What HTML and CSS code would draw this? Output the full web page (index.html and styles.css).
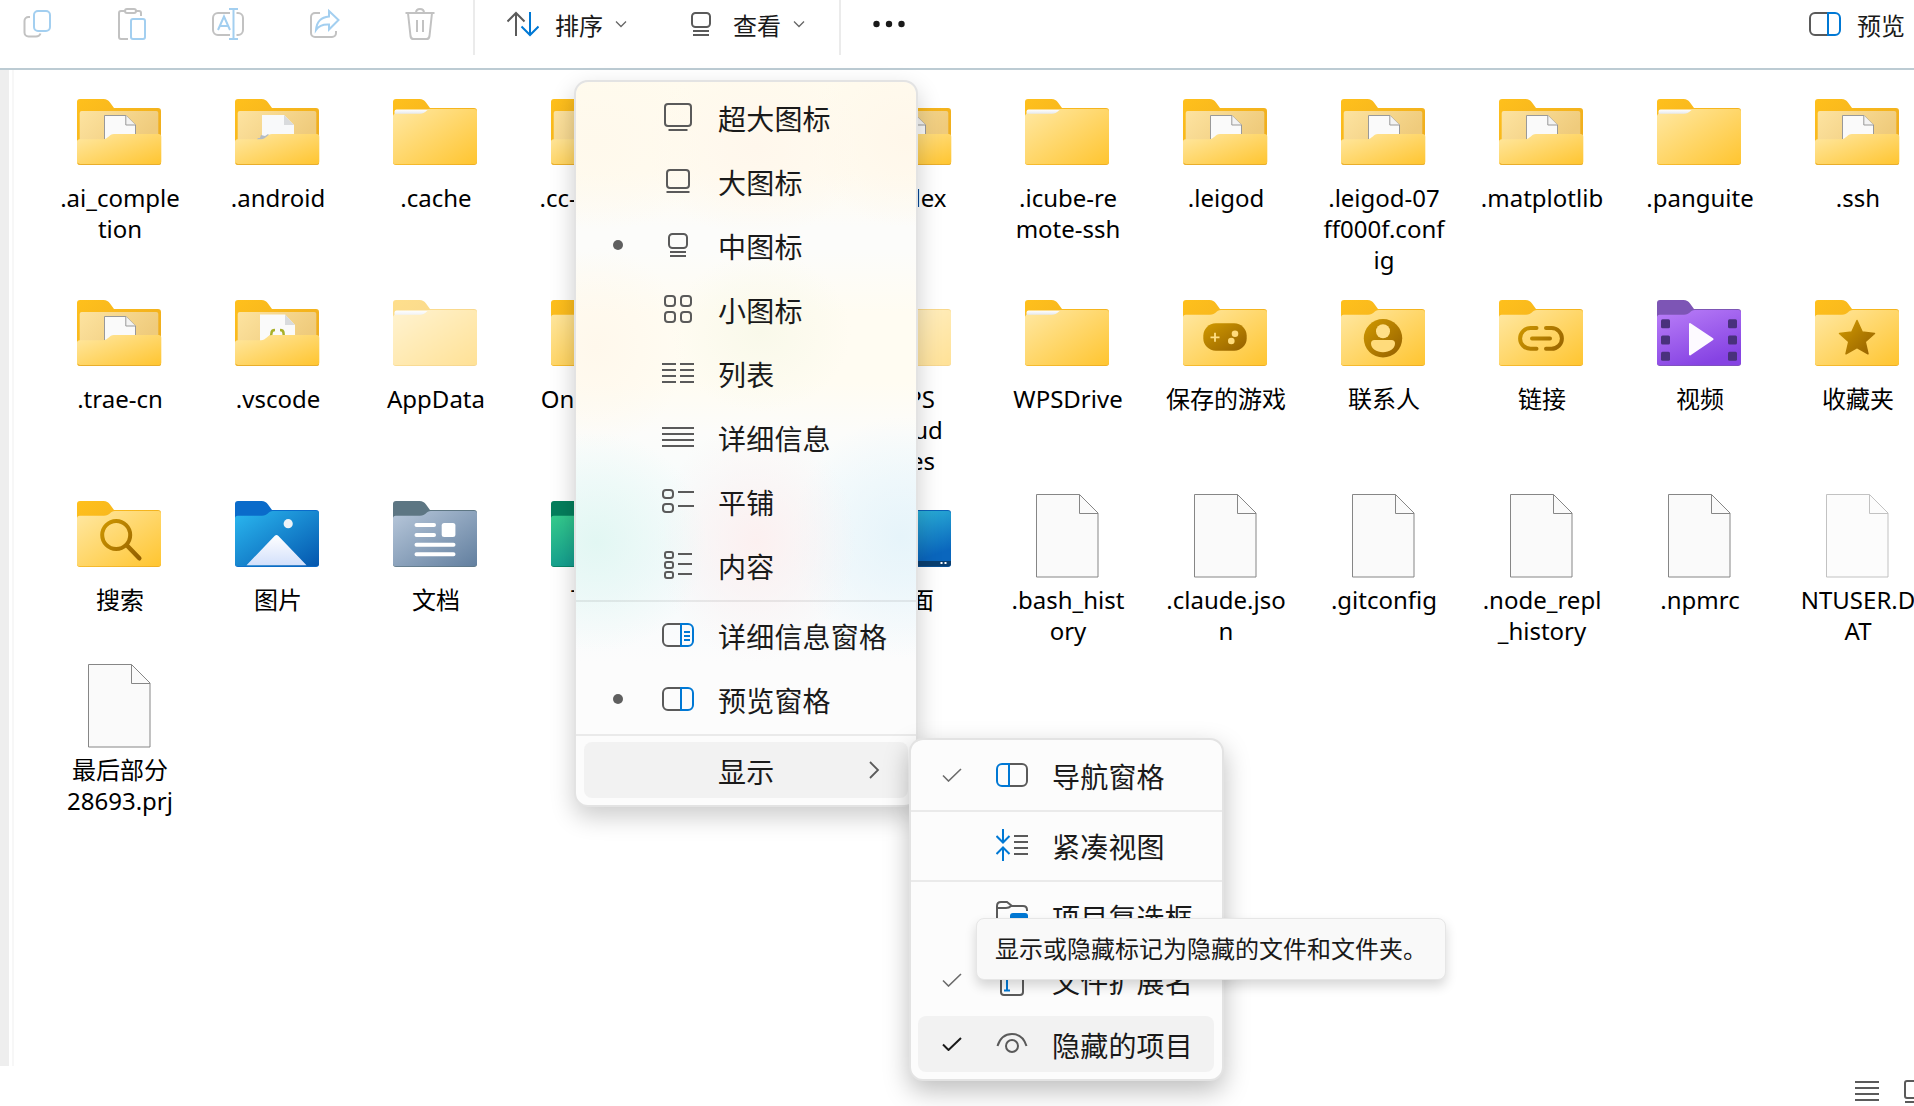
FILE: index.html
```html
<!DOCTYPE html>
<html lang="zh-CN">

<head>
    <meta charset="UTF-8">
    <title>文件资源管理器</title>
    <link rel="stylesheet" href="styles.css">
</head>

<body>
    <!-- shared icons -->
    <svg class="defs" width="0" height="0">
        <defs>
            <linearGradient id="gTab" x1="0" y1="0" x2="1" y2="1">
                <stop offset="0" stop-color="#ffc01c" />
                <stop offset="1" stop-color="#eaa81f" />
            </linearGradient>
            <linearGradient id="gFront" x1="0" y1="0" x2="1" y2="1">
                <stop offset="0" stop-color="#ffe8a3" />
                <stop offset="1" stop-color="#ffc530" />
            </linearGradient>
            <linearGradient id="gInner" x1="0" y1="0" x2="1" y2="0.4">
                <stop offset="0" stop-color="#fde3a0" />
                <stop offset="1" stop-color="#efcb7c" />
            </linearGradient>
            <linearGradient id="gGlyph" x1="0" y1="0" x2="1" y2="1">
                <stop offset="0" stop-color="#d19a00" />
                <stop offset="1" stop-color="#946000" />
            </linearGradient>
            <linearGradient id="gGlyphUser" gradientUnits="userSpaceOnUse" x1="26" y1="36" x2="70" y2="70">
                <stop offset="0" stop-color="#d19a00" />
                <stop offset="1" stop-color="#946000" />
            </linearGradient>
            <linearGradient id="gPaper" x1="0" y1="0" x2="0" y2="1">
                <stop offset="0" stop-color="#ffffff" />
                <stop offset="1" stop-color="#dfe2e6" />
            </linearGradient>
            <linearGradient id="gPurple" x1="0" y1="0" x2="0.5" y2="1">
                <stop offset="0" stop-color="#ba7ff8" />
                <stop offset="1" stop-color="#8643e3" />
            </linearGradient>
            <linearGradient id="gBlue" x1="0" y1="0" x2="1" y2="1">
                <stop offset="0" stop-color="#2bb8f0" />
                <stop offset="1" stop-color="#0456ae" />
            </linearGradient>
            <linearGradient id="gSlate" x1="0" y1="0" x2="1" y2="1">
                <stop offset="0" stop-color="#b7c7da" />
                <stop offset="1" stop-color="#627f9f" />
            </linearGradient>
            <linearGradient id="gGreen" x1="0" y1="0" x2="0.6" y2="1">
                <stop offset="0" stop-color="#38d08c" />
                <stop offset="1" stop-color="#0c928f" />
            </linearGradient>
            <linearGradient id="gDesk" x1="0" y1="0" x2="0.6" y2="1">
                <stop offset="0" stop-color="#36c9e0" />
                <stop offset="1" stop-color="#0a66bd" />
            </linearGradient>
            <linearGradient id="gHill" x1="0" y1="0" x2="0" y2="1">
                <stop offset="0" stop-color="#ffffff" />
                <stop offset="1" stop-color="#d3e0fb" />
            </linearGradient>
        </defs>

        <symbol id="back" viewBox="0 0 96 96">
            <path d="M6 18a3 3 0 0 1 3-3h23.500c3 0 5 1.300 6.500 3.500l4 5.500H87a3 3 0 0 1 3 3V78a3 3 0 0 1-3 3H9a3 3 0 0 1-3-3z" />
        </symbol>
        <symbol id="front" viewBox="0 0 96 96">
            <path d="M6 32.500a2.700 2.700 0 0 1 2.700-2.700H33c6 0 6-4.800 11-4.800h43.300a2.700 2.700 0 0 1 2.700 2.700V77.500a2.800 2.800 0 0 1-2.800 2.800H8.800A2.800 2.800 0 0 1 6 77.500z" />
        </symbol>
        <symbol id="base" viewBox="0 0 96 96">
            <use href="#back" fill="url(#gTab)" />
            <use href="#front" fill="url(#gFront)" />
        </symbol>
        <symbol id="folder" viewBox="0 0 96 96">
            <use href="#back" fill="url(#gTab)" />
            <path d="M7.500 27.500a2 2 0 0 1 2-2H44L40 31H7.500z" fill="url(#gPaper)" />
            <use href="#front" fill="url(#gFront)" />
        </symbol>
        <symbol id="open" viewBox="0 0 96 96">
            <use href="#back" fill="url(#gTab)" />
            <path d="M8.700 29a2 2 0 0 1 2-2h74.600a2 2 0 0 1 2 2v30H8.700z" fill="url(#gInner)" />
        </symbol>
        <symbol id="openFront" viewBox="0 0 96 96">
            <path d="M6 58a2.700 2.700 0 0 1 2.700-2.700H32c5 0 6-5.300 11-5.300h44.600a2.700 2.700 0 0 1 2.700 2.700V77.500a2.800 2.800 0 0 1-2.800 2.800H8.800A2.800 2.800 0 0 1 6 77.500z" fill="url(#gFront)" />
            <path d="M7 79.500q1 1 2.500 1h78q1.500 0 2.500-1" fill="none" stroke="#e9ae2c" />
        </symbol>
        <symbol id="openDoc" viewBox="0 0 96 96">
            <use href="#open" />
            <path d="M33.500 60V31.500H55L64.500 41V60z" fill="#fafafa" stroke="#999" />
            <path d="M54.800 31.500V41h9.700" fill="#f3f3f3" stroke="#999" />
            <use href="#openFront" />
        </symbol>
        <symbol id="openAndroid" viewBox="0 0 96 96">
            <use href="#open" />
            <path d="M33 60V31H55L65 41V60z" fill="#f8f9fa" />
            <path d="M55 31V41h10z" fill="#d9dbdd" />
            <path d="M26 58l3-4 2 0 1-3 4 1 3-2 3 3 1 5z" fill="#b4bcc4" />
            <use href="#openFront" />
        </symbol>
        <symbol id="openCode" viewBox="0 0 96 96">
            <use href="#open" />
            <path d="M31 60V29.500H56L66 40V60z" fill="#fafafa" />
            <path d="M56 29.500V40h10z" fill="#d9dbdd" />
            <path d="M46 45q-3.500 0-3.500 3t-1.500 5M51 45q3.500 0 3.500 3t1 5" fill="none" stroke="#a9b02a" stroke-width="2.500" />
            <use href="#openFront" />
        </symbol>
        <symbol id="games" viewBox="0 0 96 96">
            <use href="#base" />
            <rect x="26.300" y="38.300" width="43.400" height="27.400" rx="12.500" fill="url(#gGlyph)" />
            <path d="M33.500 52.300h9M38 47.800v9" stroke="#ffdf85" stroke-width="1.800" />
            <circle cx="58" cy="48.800" r="3.300" fill="#ffdb7b" />
            <circle cx="54.300" cy="56" r="3.300" fill="#ffdb7b" />
        </symbol>
        <symbol id="contacts" viewBox="0 0 96 96">
            <use href="#base" />
            <circle cx="48" cy="53.300" r="19.200" fill="url(#gGlyph)" />
            <circle cx="48" cy="46.300" r="7" fill="#ffdf88" />
            <path d="M39.500 55h17q3.500 0 3.500 3.500c0 5-5.500 8.700-12 8.700s-12-3.700-12-8.700q0-3.500 3.500-3.500z" fill="#ffdb7b" />
        </symbol>
        <symbol id="links" viewBox="0 0 96 96">
            <use href="#base" />
            <path d="M43.500 43H37.500a10.400 10.400 0 0 0 0 20.800h6M53 43h5.500a10.400 10.400 0 0 1 0 20.800H53M39 53.400h18" fill="none" stroke="url(#gGlyphUser)" stroke-width="4" stroke-linecap="round" />
        </symbol>
        <symbol id="star" viewBox="0 0 96 96">
            <use href="#base" />
            <path d="M48 35.500l5.200 11.500 12.300 1.400-9.300 8.300 2.800 12.100L48 62.500l-11 6.300 2.800-12.100-9.300-8.300 12.300-1.400z" fill="url(#gGlyph)" stroke="url(#gGlyph)" stroke-width="1.500" stroke-linejoin="round" />
        </symbol>
        <symbol id="search" viewBox="0 0 96 96">
            <use href="#base" />
            <path d="M56 59.500L68.300 72.300" stroke="url(#gGlyphUser)" stroke-width="4.500" stroke-linecap="round" />
            <circle cx="45.200" cy="49" r="14" fill="none" stroke="url(#gGlyphUser)" stroke-width="4" />
        </symbol>
        <symbol id="videos" viewBox="0 0 96 96">
            <use href="#back" fill="#7d55b5" />
            <use href="#front" fill="url(#gPurple)" />
            <g fill="#49317c">
                <rect x="10" y="34.300" width="9" height="9" rx="1.500" />
                <rect x="10" y="50.500" width="9" height="9" rx="1.500" />
                <rect x="10" y="66.700" width="9" height="9" rx="1.500" />
                <rect x="77" y="34.300" width="9" height="9" rx="1.500" />
                <rect x="77" y="50.500" width="9" height="9" rx="1.500" />
                <rect x="77" y="66.700" width="9" height="9" rx="1.500" />
            </g>
            <path d="M39 39L61.500 54.200 39 69.500z" fill="#fdfaff" stroke="#fdfaff" stroke-width="2" stroke-linejoin="round" />
        </symbol>
        <symbol id="pictures" viewBox="0 0 96 96">
            <use href="#back" fill="#0a6bca" />
            <use href="#front" fill="url(#gBlue)" />
            <circle cx="59.200" cy="37.700" r="4.600" fill="#eef3f7" />
            <path d="M17.500 79.200L45.800 49.800q1.700-1.800 3.400 0L77.500 79.200z" fill="url(#gHill)" />
        </symbol>
        <symbol id="documents" viewBox="0 0 96 96">
            <use href="#back" fill="#5d7683" />
            <use href="#front" fill="url(#gSlate)" />
            <path d="M29.500 39h17.500M29.500 49h17.500M29.500 58.700h37M29.500 68.300h37" stroke="#fff" stroke-width="4" stroke-linecap="round" />
            <rect x="54.700" y="37" width="13.700" height="14" rx="2.500" fill="#fff" />
        </symbol>
        <symbol id="downloads" viewBox="0 0 96 96">
            <use href="#back" fill="#057e5c" />
            <use href="#front" fill="url(#gGreen)" />
        </symbol>
        <symbol id="desktop" viewBox="0 0 96 96">
            <rect x="6" y="24" width="84" height="57" rx="3" fill="#0b62b8" />
            <path d="M6 28a3 3 0 0 1 3-3h78a3 3 0 0 1 3 3V75H6z" fill="url(#gDesk)" />
            <path d="M6 75h84v2.500a3 3 0 0 1-3 3H9a3 3 0 0 1-3-3z" fill="#0a3f70" />
            <path d="M79.500 76h2v2h-2zM83.500 76h2v2h-2z" fill="#fff" />
        </symbol>
        <symbol id="file" viewBox="0 0 96 96">
            <path d="M17.500 8.500H60.500L79 27V91H17.500z" fill="#fafafa" stroke="#868686" />
            <path d="M60.500 8.500V27.500H79" fill="none" stroke="#868686" />
        </symbol>
        <symbol id="check" viewBox="0 0 20 14">
            <path d="M1 7.500L6.500 13 19 1" />
        </symbol>
        <symbol id="chevron" viewBox="0 0 12 12">
            <path d="M1 3.500l5 5 5-5" fill="none" stroke="#666" stroke-width="1.300" />
        </symbol>
    </svg>

    <div class="toolbar">
        <div class="tool">
            <svg width="32" height="32" viewBox="0 0 32 32">
                <path d="M10 9H8.500a4 4 0 0 0-4 4v11.500a4 4 0 0 0 4 4h7.500q3.500 0 4.500-3" class="off" />
                <rect x="14" y="3" width="16" height="20" rx="4" class="off blue" />
            </svg>
        </div>
        <div class="tool">
            <svg width="32" height="32" viewBox="0 0 32 32">
                <path d="M12 31H5q-2 0-2-2V5q0-2 2-2h4M20 3h3q2 0 2 2v3" class="off" />
                <rect x="9" y="1" width="11" height="4" rx="2" class="off" />
                <rect x="15" y="11" width="14" height="20" rx="2" class="off blue" />
            </svg>
        </div>
        <div class="tool">
            <svg width="32" height="32" viewBox="0 0 32 32">
                <path d="M18 5H6a5 5 0 0 0-5 5v12a5 5 0 0 0 5 5h12M24.500 5H26a5 5 0 0 1 5 5v12a5 5 0 0 1-5 5h-1.500" class="off" />
                <path d="M21.500 1v30M17 1h9M17 31h9M6 22l6-13.500L18 22M8 18h8" class="off blue" />
            </svg>
        </div>
        <div class="tool">
            <svg width="32" height="32" viewBox="0 0 32 32">
                <path d="M12 5H7a4 4 0 0 0-4 4v16a4 4 0 0 0 4 4h17a4 4 0 0 0 4-4v-2" class="off" />
                <path d="M21 3l9.500 9L21 21.500V16.500q-9-.5-13 5.500 1-12.500 13-13.500z" class="off blue" />
            </svg>
        </div>
        <div class="tool">
            <svg width="32" height="32" viewBox="0 0 32 32">
                <path d="M1.500 5h29M4 5l2.500 23q.4 3 3 3h13q2.600 0 3-3L28 5M12 5q0-4 4-4t4 4M13 12v12M19 12v12" class="off" />
            </svg>
        </div>
        <div class="divider"></div>
        <div class="drop">
            <svg width="32" height="32" viewBox="0 0 32 32">
                <path d="M9 28V5M0.500 13.500L9 5l8.500 8.500" class="ln" />
                <path d="M23 4v23M14.500 18.500L23 27l8.500-8.500" class="ln blue" />
            </svg>
            <span>排序</span>
            <svg class="arrow" width="12" height="12"><use href="#chevron" /></svg>
        </div>
        <div class="drop">
            <svg width="32" height="32" viewBox="0 0 32 32">
                <rect x="7" y="5" width="18" height="14" rx="3.500" class="ln" />
                <path d="M8 23h16M8 27h16" class="ln" />
            </svg>
            <span>查看</span>
            <svg class="arrow" width="12" height="12"><use href="#chevron" /></svg>
        </div>
        <div class="divider second"></div>
        <svg class="more" width="32" height="32" viewBox="0 0 32 32">
            <circle cx="3.500" cy="16" r="3.200" />
            <circle cx="16" cy="16" r="3.200" />
            <circle cx="28.500" cy="16" r="3.200" />
        </svg>
        <div class="preview">
            <svg width="32" height="32" viewBox="0 0 32 32">
                <path d="M19 5H6a5 5 0 0 0-5 5v12a5 5 0 0 0 5 5h13" class="ln" />
                <path d="M19 5h7a5 5 0 0 1 5 5v12a5 5 0 0 1-5 5h-7z" class="ln blue" />
            </svg>
            <span>预览</span>
        </div>
    </div>

    <div class="main">
        <div class="side"></div>
        <div class="files">
            <div class="item"><svg><use href="#openDoc" /></svg>.ai_comple<br>tion</div>
            <div class="item"><svg><use href="#openAndroid" /></svg>.android</div>
            <div class="item"><svg><use href="#folder" /></svg>.cache</div>
            <div class="item"><svg><use href="#openDoc" /></svg>.cc-switch</div>
            <div class="item"></div>
            <div class="item"><svg><use href="#openDoc" /></svg>.codex</div>
            <div class="item"><svg><use href="#folder" /></svg>.icube-re<br>mote-ssh</div>
            <div class="item"><svg><use href="#openDoc" /></svg>.leigod</div>
            <div class="item"><svg><use href="#openDoc" /></svg>.leigod-07<br>ff000f.conf<br>ig</div>
            <div class="item"><svg><use href="#openDoc" /></svg>.matplotlib</div>
            <div class="item"><svg><use href="#folder" /></svg>.panguite</div>
            <div class="item"><svg><use href="#openDoc" /></svg>.ssh</div>

            <div class="item"><svg><use href="#openDoc" /></svg>.trae-cn</div>
            <div class="item"><svg><use href="#openCode" /></svg>.vscode</div>
            <div class="item hidden"><svg><use href="#folder" /></svg>AppData</div>
            <div class="item"><svg><use href="#base" /></svg>OneDrive</div>
            <div class="item"></div>
            <div class="item hidden"><svg><use href="#folder" /></svg>WPS<br>Cloud<br>Files</div>
            <div class="item"><svg><use href="#folder" /></svg>WPSDrive</div>
            <div class="item"><svg><use href="#games" /></svg>保存的游戏</div>
            <div class="item"><svg><use href="#contacts" /></svg>联系人</div>
            <div class="item"><svg><use href="#links" /></svg>链接</div>
            <div class="item"><svg><use href="#videos" /></svg>视频</div>
            <div class="item"><svg><use href="#star" /></svg>收藏夹</div>

            <div class="item"><svg><use href="#search" /></svg>搜索</div>
            <div class="item"><svg><use href="#pictures" /></svg>图片</div>
            <div class="item"><svg><use href="#documents" /></svg>文档</div>
            <div class="item"><svg><use href="#downloads" /></svg>下载</div>
            <div class="item"></div>
            <div class="item"><svg><use href="#desktop" /></svg>桌面</div>
            <div class="item"><svg><use href="#file" /></svg>.bash_hist<br>ory</div>
            <div class="item"><svg><use href="#file" /></svg>.claude.jso<br>n</div>
            <div class="item"><svg><use href="#file" /></svg>.gitconfig</div>
            <div class="item"><svg><use href="#file" /></svg>.node_repl<br>_history</div>
            <div class="item"><svg><use href="#file" /></svg>.npmrc</div>
            <div class="item hidden"><svg><use href="#file" /></svg>NTUSER.D<br>AT</div>

            <div class="item"><svg><use href="#file" /></svg>最后部分<br>28693.prj</div>
        </div>
    </div>

    <div class="statusbar">
        <svg width="24" height="32" viewBox="0 0 24 32">
            <path d="M0 7h24M0 13h24M0 19h24M0 25h24" class="ln thin" />
        </svg>
        <svg width="24" height="32" viewBox="0 0 24 32">
            <rect x="1" y="6" width="22" height="17" rx="2" class="ln" />
            <path d="M1 27h22" class="ln" />
        </svg>
    </div>

    <!-- view menu -->
    <div class="menu view-menu">
        <div class="row">
            <span class="mark"></span>
            <svg width="32" height="32" viewBox="0 0 32 32"><rect x="3" y="3" width="26" height="22" rx="3" class="ln" /><path d="M6.500 29h19" class="ln" /></svg>
            <span class="text">超大图标</span>
        </div>
        <div class="row">
            <span class="mark"></span>
            <svg width="32" height="32" viewBox="0 0 32 32"><rect x="5" y="5" width="22" height="18" rx="3" class="ln" /><path d="M4.500 27h23" class="ln" /></svg>
            <span class="text">大图标</span>
        </div>
        <div class="row">
            <span class="mark"><i class="dot"></i></span>
            <svg width="32" height="32" viewBox="0 0 32 32"><rect x="7" y="5" width="18" height="14" rx="3.500" class="ln" /><path d="M8 23h16M8 27h16" class="ln" /></svg>
            <span class="text">中图标</span>
        </div>
        <div class="row">
            <span class="mark"></span>
            <svg width="32" height="32" viewBox="0 0 32 32">
                <rect x="3" y="3" width="10" height="10" rx="3" class="ln" /><rect x="19" y="3" width="10" height="10" rx="3" class="ln" />
                <rect x="3" y="19" width="10" height="10" rx="3" class="ln" /><rect x="19" y="19" width="10" height="10" rx="3" class="ln" />
            </svg>
            <span class="text">小图标</span>
        </div>
        <div class="row">
            <span class="mark"></span>
            <svg width="32" height="32" viewBox="0 0 32 32"><path d="M0 7h14M0 13h14M0 19h14M0 25h14M18 7h14M18 13h14M18 19h14M18 25h14" class="ln thin" /></svg>
            <span class="text">列表</span>
        </div>
        <div class="row">
            <span class="mark"></span>
            <svg width="32" height="32" viewBox="0 0 32 32"><path d="M0 7h32M0 13h32M0 19h32M0 25h32" class="ln thin" /></svg>
            <span class="text">详细信息</span>
        </div>
        <div class="row">
            <span class="mark"></span>
            <svg width="32" height="32" viewBox="0 0 32 32">
                <rect x="1" y="5" width="10" height="8" rx="3" class="ln" /><rect x="1" y="19" width="10" height="8" rx="3" class="ln" />
                <path d="M16 7h16M16 21h16" class="ln" />
            </svg>
            <span class="text">平铺</span>
        </div>
        <div class="row">
            <span class="mark"></span>
            <svg width="32" height="32" viewBox="0 0 32 32">
                <rect x="3" y="3" width="8" height="6" rx="2" class="ln" /><rect x="3" y="13" width="8" height="6" rx="2" class="ln" /><rect x="3" y="23" width="8" height="6" rx="2" class="ln" />
                <path d="M16 5h14M16 15h14M16 25h14" class="ln" />
            </svg>
            <span class="text">内容</span>
        </div>
        <div class="sep"></div>
        <div class="row">
            <span class="mark"></span>
            <svg width="32" height="32" viewBox="0 0 32 32">
                <path d="M19 5H6a5 5 0 0 0-5 5v12a5 5 0 0 0 5 5h13" class="ln" />
                <path d="M19 5h7a5 5 0 0 1 5 5v12a5 5 0 0 1-5 5h-7zM22 13h6M22 17h6M22 21h6" class="ln blue" />
            </svg>
            <span class="text">详细信息窗格</span>
        </div>
        <div class="row">
            <span class="mark"><i class="dot"></i></span>
            <svg width="32" height="32" viewBox="0 0 32 32">
                <path d="M19 5H6a5 5 0 0 0-5 5v12a5 5 0 0 0 5 5h13" class="ln" />
                <path d="M19 5h7a5 5 0 0 1 5 5v12a5 5 0 0 1-5 5h-7z" class="ln blue" />
            </svg>
            <span class="text">预览窗格</span>
        </div>
        <div class="sep wide"></div>
        <div class="row active">
            <span class="mark"></span>
            <span class="blank"></span>
            <span class="text">显示</span>
            <svg class="next" width="12" height="18" viewBox="0 0 12 18"><path d="M2 1l8 8-8 8" class="ln thin" /></svg>
        </div>
    </div>

    <!-- show submenu -->
    <div class="menu show-menu">
        <div class="row">
            <span class="mark"><svg class="tick" width="20" height="14"><use href="#check" /></svg></span>
            <svg width="32" height="32" viewBox="0 0 32 32">
                <path d="M13 5h13a5 5 0 0 1 5 5v12a5 5 0 0 1-5 5H13" class="ln" />
                <path d="M13 5H6a5 5 0 0 0-5 5v12a5 5 0 0 0 5 5h7z" class="ln blue" />
            </svg>
            <span class="text">导航窗格</span>
        </div>
        <div class="sep"></div>
        <div class="row">
            <span class="mark"></span>
            <svg width="32" height="32" viewBox="0 0 32 32">
                <path d="M7 0v13M0.500 7L7 13.500 13.500 7M7 32V19M0.500 25L7 18.500l6.500 6.500" class="ln blue" />
                <path d="M18 7h14M18 13h14M18 19h14M18 25h14" class="ln thin" />
            </svg>
            <span class="text">紧凑视图</span>
        </div>
        <div class="sep wide"></div>
        <div class="row">
            <span class="mark"></span>
            <svg width="32" height="32" viewBox="0 0 32 32">
                <path d="M1 27V6q0-4 4-4h6l5 4h11q4 0 4 4v1M1 8h9q3 0 5-2" class="ln" />
                <rect x="14" y="13" width="18" height="18" rx="3" fill="#0078d4" />
                <path d="M18 22l4 4 7-7" stroke="#fff" stroke-width="2" fill="none" />
            </svg>
            <span class="text">项目复选框</span>
        </div>
        <div class="row">
            <span class="mark"><svg class="tick" width="20" height="14"><use href="#check" /></svg></span>
            <svg width="32" height="32" viewBox="0 0 32 32">
                <path d="M5 12V4q0-3 3-3h10l9 9v18q0 3-3 3H8q-3 0-3-3V12" class="ln" />
                <path d="M11 14v12M8 14h6M8 26.500h6" class="ln blue" />
            </svg>
            <span class="text">文件扩展名</span>
        </div>
        <div class="row active">
            <span class="mark"><svg class="tick dark" width="20" height="14"><use href="#check" /></svg></span>
            <svg width="32" height="32" viewBox="0 0 32 32">
                <path d="M1.500 18C4 10 9.500 6 16 6s12 4 14.500 12" class="ln" />
                <circle cx="16" cy="18" r="6" class="ln" />
            </svg>
            <span class="text">隐藏的项目</span>
        </div>
    </div>

    <div class="tooltip">显示或隐藏标记为隐藏的文件和文件夹。</div>
</body>

</html>
```

FILE: styles.css
```css
html {
    height: 1106px;
    overflow: hidden;
}

body {
    margin: 0;
    width: 1914px;
    height: 1106px;
    overflow: hidden;
    position: relative;
    background-color: #ffffff;
    color: #1a1a1a;
    font-family: "Noto Sans", "Noto Sans CJK SC", sans-serif;
    font-size: 24px;
}

.defs {
    position: absolute;
}

/* icon strokes */
.ln {
    fill: none;
    stroke: #5a5a5a;
    stroke-width: 2;
}

.thin {
    stroke-width: 1.8;
}

.ln.blue {
    stroke: #0078d4;
}

.off {
    fill: none;
    stroke: #c2c2c2;
    stroke-width: 2;
}

.off.blue {
    stroke: #a3cff0;
}

/* toolbar */
.toolbar {
    display: flex;
    align-items: flex-start;
    box-sizing: border-box;
    height: 70px;
    padding-top: 8px;
    border-bottom: 2px solid #bccbd3;
    white-space: nowrap;
}

.tool {
    width: 96px;
    height: 32px;
    text-align: center;
}

.tool:first-child {
    margin-left: -12px;
}

.divider {
    width: 2px;
    height: 55px;
    margin: -8px 32px 0 5px;
    background-color: #ebebeb;
}

.divider.second {
    margin-left: -24px;
}

.drop {
    display: flex;
    align-items: center;
    height: 32px;
    margin-right: 58px;
}

.drop span {
    width: 48px;
    margin: 0 12px 0 16px;
}

.more {
    fill: #1a1a1a;
}

.preview {
    display: flex;
    align-items: center;
    height: 32px;
    margin-left: auto;
    padding-right: 9px;
}

.preview span {
    margin-left: 16px;
}

/* file area */
.main {
    display: flex;
    height: 996px;
}

.side {
    flex: none;
    width: 3px;
    border-left: 9px solid #eeeeee;
    border-right: 2px solid #f7f7f7;
}

.files {
    flex: none;
    display: grid;
    grid-template-columns: repeat(12, 158px);
    grid-template-rows: 201px 201px 170px 170px;
    padding: 14px 0 0 26px;
}

.item {
    padding-left: 2px;
    color: #000000;
    line-height: 31px;
    text-align: center;
    white-space: nowrap;
}

.item svg {
    display: block;
    width: 96px;
    height: 96px;
    margin: 0 0 2px 29px;
}

.hidden svg {
    opacity: 0.5;
}

.statusbar {
    display: flex;
    gap: 25px;
    padding: 9px 0 0 1855px;
    width: 59px;
    height: 31px;
    overflow: hidden;
}

.statusbar svg {
    flex: none;
}

/* menus */
.menu {
    position: absolute;
    box-sizing: border-box;
    border: 2px solid #e3e3e3;
    border-radius: 14px;
    background-color: #fcfcfc;
    background-clip: padding-box;
    font-size: 28px;
}

.view-menu {
    left: 574px;
    top: 80px;
    width: 344px;
    height: 727px;
    padding-top: 3px;
    box-shadow: 0 10px 24px rgba(0, 0, 0, 0.2);
    background-image:
        radial-gradient(ellipse 110px 110px at 20px 460px, #e2f7f3, rgba(236, 252, 248, 0)),
        radial-gradient(ellipse 100px 120px at 180px 460px, #fcf0f0, rgba(253, 243, 243, 0)),
        radial-gradient(ellipse 110px 120px at 325px 455px, #e6f4fa, rgba(238, 247, 251, 0)),
        radial-gradient(ellipse 120px 90px at 20px 60px, #fff9ec, rgba(255, 249, 236, 0)),
        radial-gradient(ellipse 110px 90px at 180px 65px, #fff7ec, rgba(255, 249, 236, 0)),
        radial-gradient(ellipse 100px 90px at 330px 55px, #fff7ea, rgba(255, 249, 236, 0)),
        radial-gradient(ellipse 90px 100px at 20px 265px, #fff8ec, rgba(255, 249, 236, 0)),
        radial-gradient(ellipse 90px 80px at 185px 250px, #f9f9ea, rgba(252, 252, 236, 0)),
        linear-gradient(#fffbee 0, #fffbf0 90px, #fcfcfa 145px, #fcfcfa 170px, #fffcf2 230px, #fffcf2 300px, #fcfcfa 350px, #f8fcfc 400px, #f5fafc 490px, #fcfcfc 580px);
}

.show-menu {
    left: 909px;
    top: 738px;
    width: 315px;
    height: 343px;
    padding-top: 3px;
    box-shadow: 0 10px 26px rgba(0, 0, 0, 0.26);
}

.row {
    display: flex;
    align-items: center;
    height: 56px;
    margin: 4px 8px;
    border-radius: 8px;
    white-space: nowrap;
}

.row.active {
    background-color: #f2f2f2;
}

.row + .row {
    margin-top: 8px;
}

.mark {
    display: flex;
    justify-content: center;
    align-items: center;
    width: 68px;
    margin-right: 10px;
}

.blank {
    width: 32px;
}

.show-menu .row {
    margin-left: 7px;
}

.text {
    margin: 4px 0 0 24px;
    line-height: 40px;
    letter-spacing: 0.2px;
}

.dot {
    width: 10px;
    height: 10px;
    border-radius: 50%;
    background-color: #5f5f5f;
}

.tick {
    fill: none;
    stroke: #6b6b6b;
    stroke-width: 1.6;
}

.tick.dark {
    stroke: #1a1a1a;
    stroke-width: 2;
}

.next {
    margin-left: auto;
    margin-right: 28px;
}

.sep {
    height: 2px;
    margin: 7px 0 5px;
    background-color: rgba(0, 0, 0, 0.07);
}

.sep.wide {
    margin-bottom: 6px;
}

.tooltip {
    position: absolute;
    left: 976px;
    top: 918px;
    box-sizing: border-box;
    width: 470px;
    height: 62px;
    padding-left: 18px;
    border: 1px solid #e6e6e6;
    border-radius: 8px;
    background-color: #f9f9f9;
    box-shadow: 0 6px 12px rgba(0, 0, 0, 0.16);
    line-height: 60px;
    white-space: nowrap;
}
```
